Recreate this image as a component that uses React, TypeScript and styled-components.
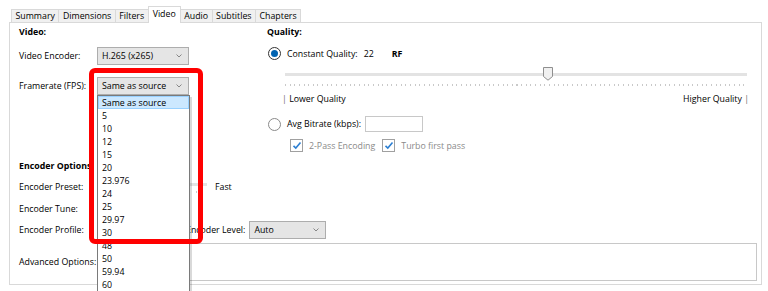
import React from "react";
import styled, { createGlobalStyle, css } from "styled-components";

const GlobalStyle = createGlobalStyle`
  html, body {
    margin: 0;
    padding: 0;
    background: #ffffff;
    overflow: hidden;
  }
  body {
    font-family: "Open Sans", "Noto Sans", sans-serif;
    font-size: 8.8px;
    color: #000;
  }
`;

const Root = styled.div`
  width: 768px;
  height: 291px;
  padding: 6px 0 0 9px;
  box-sizing: border-box;
`;

const TabStrip = styled.div`
  display: flex;
  align-items: flex-end;
  height: 16px;
  margin-left: 3px;
  position: relative;
  z-index: 1;
`;

const Tab = styled.div<{ selected?: boolean }>`
  height: 13px;
  line-height: 13px;
  padding: 0 3.5px;
  background: #f0f0f0;
  border: 1px solid #d9d9d9;
  border-bottom: none;
  margin-left: -1px;
  box-sizing: border-box;
  white-space: nowrap;

  ${({ selected }) =>
    selected &&
    css`
      height: 17px;
      line-height: 15px;
      background: #ffffff;
      margin-bottom: -1px;
      padding: 0 4px;
    `}
`;

const Panel = styled.div`
  width: 753px;
  height: 263px;
  box-sizing: border-box;
  border: 1px solid #d9d9d9;
  padding: 3px 4px 0 9px;
`;

const TopSection = styled.div`
  display: flex;
  height: 126px;
`;

const LeftColumn = styled.div`
  width: 248px;
  display: flex;
  flex-direction: column;
`;

const RightColumn = styled.div`
  flex: 1;
  margin-right: 8px;
  display: flex;
  flex-direction: column;
`;

const Heading = styled.div`
  font-weight: bold;
  line-height: 12px;
  height: 12px;
  white-space: nowrap;
`;

const FormRow = styled.div<{ gap: number }>`
  display: flex;
  align-items: center;
  height: 18px;
  margin-top: ${({ gap }) => gap}px;
`;

const Label = styled.div`
  width: 78px;
  flex-shrink: 0;
  white-space: nowrap;
`;

const InlineLabel = styled.div<{ gap?: number }>`
  margin-left: ${({ gap }) => gap ?? 0}px;
  margin-right: 4px;
  white-space: nowrap;
`;

const SelectAnchor = styled.div`
  position: relative;
`;

const SelectBox = styled.div<{ width: number }>`
  width: ${({ width }) => width}px;
  height: 18px;
  box-sizing: border-box;
  background: #e5e5e5;
  border: 1px solid #adadad;
  display: flex;
  align-items: center;
  justify-content: space-between;
  padding: 0 6px 0 4px;
  white-space: nowrap;
`;

const Chevron = () => (
  <svg width="6" height="4" viewBox="0 0 6 4">
    <path d="M0.5 0.5 L3 3 L5.5 0.5" fill="none" stroke="#7a7a7a" strokeWidth="0.9" />
  </svg>
);

const Select = ({ value, width }: { value: string; width: number }) => (
  <SelectBox width={width}>
    <span>{value}</span>
    <Chevron />
  </SelectBox>
);

const DropList = styled.ul`
  position: absolute;
  left: 0;
  top: 18px;
  width: 93px;
  margin: 0;
  padding: 0;
  list-style: none;
  background: #ffffff;
  border: 1px solid #7a7a7a;
  box-shadow: 2px 2px 0 rgba(0, 0, 0, 0.15);
  box-sizing: border-box;
  z-index: 5;
`;

const DropItem = styled.li<{ selected?: boolean }>`
  height: 13px;
  line-height: 12px;
  padding: 0 3px;
  box-sizing: border-box;
  border: 1px solid transparent;
  white-space: nowrap;

  ${({ selected }) =>
    selected &&
    css`
      background: #cce8ff;
      border-color: #99d1ff;
    `}
`;

const Highlight = styled.div`
  position: absolute;
  left: -8px;
  top: -9px;
  width: 114px;
  height: 176px;
  box-sizing: border-box;
  border: 5px solid #ff0000;
  border-radius: 6px;
  z-index: 6;
  pointer-events: none;
`;

const RadioRow = styled.div<{ gap: number; height: number }>`
  display: flex;
  align-items: center;
  height: ${({ height }) => height}px;
  margin-top: ${({ gap }) => gap}px;
  margin-left: 1px;
  white-space: nowrap;
`;

const Radio = styled.span<{ checked?: boolean }>`
  width: 13px;
  height: 13px;
  border-radius: 50%;
  box-sizing: border-box;
  border: 1px solid ${({ checked }) => (checked ? "#333" : "#8a8a8a")};
  background: #fff;
  display: inline-flex;
  align-items: center;
  justify-content: center;
  margin-right: 6px;
  flex-shrink: 0;

  ${({ checked }) =>
    checked &&
    css`
      &::after {
        content: "";
        width: 7px;
        height: 7px;
        border-radius: 50%;
        background: #0063b1;
      }
    `}
`;

const Bold = styled.span<{ gap?: number }>`
  font-weight: bold;
  margin-left: ${({ gap }) => gap ?? 0}px;
`;

const Value = styled.span`
  margin-left: 6px;
`;

const QualitySlider = styled.div`
  position: relative;
  height: 21px;
  margin: 4px 2px 0 18px;
`;

const Track = styled.div`
  position: absolute;
  left: 0;
  right: 0;
  top: 6px;
  height: 3px;
  background: #e3e3e3;
`;

const Ticks = styled.div`
  position: absolute;
  left: 0;
  right: 0;
  top: 17px;
  height: 2px;
  background: repeating-linear-gradient(
    to right,
    #c9c9c9 0,
    #c9c9c9 1px,
    transparent 1px,
    transparent 4.63px
  );
`;

const Thumb = styled.svg`
  position: absolute;
  top: 0;
  margin-left: -5px;
`;

const ScaleLabels = styled.div`
  display: flex;
  justify-content: space-between;
  line-height: 12px;
  margin: 6px 0 0 15px;
`;

const Bar = styled.span`
  color: #6b6b6b;
`;

const TextInput = styled.div<{ width: number; height: number }>`
  width: ${({ width }) => width}px;
  height: ${({ height }) => height}px;
  box-sizing: border-box;
  border: 1px solid #c8c8c8;
  background: #fff;
`;

const CheckRow = styled.div`
  display: flex;
  align-items: center;
  height: 13px;
  margin: 7px 0 0 23px;
  color: #8a8a8a;
  white-space: nowrap;
`;

const CheckBox = styled.span<{ gap?: number }>`
  width: 13px;
  height: 13px;
  box-sizing: border-box;
  border: 1px solid #a0a0a0;
  background: #fff;
  display: inline-flex;
  align-items: center;
  justify-content: center;
  margin-left: ${({ gap }) => gap ?? 0}px;
  margin-right: 6px;
`;

const Check = () => (
  <svg width="10" height="9" viewBox="0 0 10 9">
    <path d="M1.5 4.8 L3.8 7 L8.5 1.5" fill="none" stroke="#2d7fd2" strokeWidth="1.6" />
  </svg>
);

const BottomSection = styled.div`
  display: flex;
  flex-direction: column;
  margin-top: 8px;
`;

const PresetSlider = styled.div`
  position: relative;
  width: 110px;
  height: 16px;
`;

const PresetTrack = styled.div`
  position: absolute;
  left: 0;
  right: 0;
  top: 4px;
  height: 3px;
  background: #e3e3e3;
`;

const PresetTicks = styled(Ticks)`
  top: 12px;
  background: repeating-linear-gradient(
    to right,
    #c9c9c9 0,
    #c9c9c9 1px,
    transparent 1px,
    transparent 11px
  );
`;

const AdvancedRow = styled.div`
  display: flex;
  align-items: center;
  margin-top: 4px;
`;

const framerates = [
  "Same as source",
  "5",
  "10",
  "12",
  "15",
  "20",
  "23.976",
  "24",
  "25",
  "29.97",
  "30",
  "48",
  "50",
  "59.94",
  "60",
];

const tabs = ["Summary", "Dimensions", "Filters", "Video", "Audio", "Subtitles", "Chapters"];

export default function App() {
  const quality = 22;
  const thumbPct = 57;

  return (
    <Root>
      <GlobalStyle />
      <TabStrip>
        {tabs.map((t) => (
          <Tab key={t} selected={t === "Video"}>
            {t}
          </Tab>
        ))}
      </TabStrip>
      <Panel>
        <TopSection>
          <LeftColumn>
            <Heading>Video:</Heading>
            <FormRow gap={9}>
              <Label>Video Encoder:</Label>
              <Select value="H.265 (x265)" width={92} />
            </FormRow>
            <FormRow gap={12}>
              <Label>Framerate (FPS):</Label>
              <SelectAnchor>
                <Select value="Same as source" width={92} />
                <DropList>
                  {framerates.map((f, i) => (
                    <DropItem key={f} selected={i === 0}>
                      {f}
                    </DropItem>
                  ))}
                </DropList>
                <Highlight />
              </SelectAnchor>
            </FormRow>
          </LeftColumn>
          <RightColumn>
            <Heading>Quality:</Heading>
            <RadioRow gap={7} height={18}>
              <Radio checked />
              Constant Quality:
              <Value>{quality}</Value>
              <Bold gap={18}>RF</Bold>
            </RadioRow>
            <QualitySlider>
              <Track />
              <Ticks />
              <Thumb
                width="10"
                height="14"
                viewBox="0 0 10 14"
                style={{ left: `${thumbPct}%` }}
              >
                <path d="M0.5 0.5 H9.5 V9.5 L5 13.2 L0.5 9.5 Z" fill="#f0f0f0" stroke="#8f8f8f" />
              </Thumb>
            </QualitySlider>
            <ScaleLabels>
              <span>
                <Bar>|</Bar> Lower Quality
              </span>
              <span>
                Higher Quality <Bar>|</Bar>
              </span>
            </ScaleLabels>
            <RadioRow gap={11} height={16}>
              <Radio />
              <InlineLabel>Avg Bitrate (kbps):</InlineLabel>
              <TextInput width={58} height={16} />
            </RadioRow>
            <CheckRow>
              <CheckBox>
                <Check />
              </CheckBox>
              2-Pass Encoding
              <CheckBox gap={7}>
                <Check />
              </CheckBox>
              Turbo first pass
            </CheckRow>
          </RightColumn>
        </TopSection>
        <BottomSection>
          <Heading>Encoder Options</Heading>
          <FormRow gap={6}>
            <Label>Encoder Preset:</Label>
            <PresetSlider>
              <PresetTrack />
              <PresetTicks />
            </PresetSlider>
            <InlineLabel gap={8}>Fast</InlineLabel>
          </FormRow>
          <FormRow gap={4}>
            <Label>Encoder Tune:</Label>
            <Select value="" width={80} />
          </FormRow>
          <FormRow gap={3}>
            <Label>Encoder Profile:</Label>
            <Select value="" width={80} />
            <InlineLabel gap={9}>Encoder Level:</InlineLabel>
            <Select value="Auto" width={77} />
          </FormRow>
          <AdvancedRow>
            <Label>Advanced Options:</Label>
            <TextInput width={660} height={38} />
          </AdvancedRow>
        </BottomSection>
      </Panel>
    </Root>
  );
}
